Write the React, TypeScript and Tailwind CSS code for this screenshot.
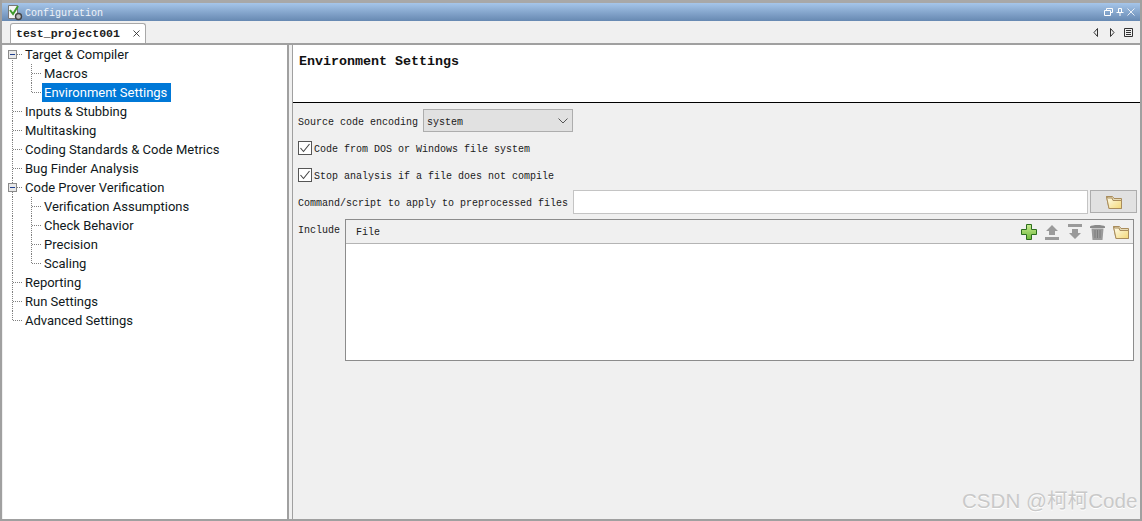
import { X } from "lucide-react";

const mono = "font-['Liberation_Mono','DejaVu_Sans_Mono',monospace]";

type Node = { label: string; level: 0 | 1; box?: boolean; last?: boolean; end?: boolean; selected?: boolean };

const tree: Node[] = [
  { label: "Target & Compiler", level: 0, box: true },
  { label: "Macros", level: 1 },
  { label: "Environment Settings", level: 1, last: true, selected: true },
  { label: "Inputs & Stubbing", level: 0 },
  { label: "Multitasking", level: 0 },
  { label: "Coding Standards & Code Metrics", level: 0 },
  { label: "Bug Finder Analysis", level: 0 },
  { label: "Code Prover Verification", level: 0, box: true },
  { label: "Verification Assumptions", level: 1 },
  { label: "Check Behavior", level: 1 },
  { label: "Precision", level: 1 },
  { label: "Scaling", level: 1, last: true },
  { label: "Reporting", level: 0 },
  { label: "Run Settings", level: 0 },
  { label: "Advanced Settings", level: 0, end: true },
];

function Connector({ node, first }: { node: Node; first: boolean }) {
  const w = node.level === 0 ? 19 : 38;
  const dash = { stroke: "#808080", strokeWidth: 1, strokeDasharray: "1 1" };
  return (
    <svg width={w} height={19} className="shrink-0">
      <line x1={8.5} x2={8.5} y1={first ? 9 : 0} y2={node.end ? 9.5 : 19} {...dash} />
      {node.level === 0 && <line x1={9} x2={19} y1={9.5} y2={9.5} {...dash} />}
      {node.level === 1 && (
        <>
          <line x1={27.5} x2={27.5} y1={0} y2={node.last ? 9.5 : 19} {...dash} />
          <line x1={28} x2={38} y1={9.5} y2={9.5} {...dash} />
        </>
      )}
      {node.box && (
        <>
          <rect x={4.5} y={5.5} width={8} height={8} fill="#e8e8e8" stroke="#8a8a8a" />
          <line x1={6} x2={11} y1={9.5} y2={9.5} stroke="#1f3f8f" />
        </>
      )}
    </svg>
  );
}

function TreeRow({ node, first }: { node: Node; first: boolean }) {
  return (
    <div className="flex h-[19px] items-center">
      <Connector node={node} first={first} />
      <span
        className={
          node.selected
            ? "bg-[#0078d7] px-[2px] pr-[4px] leading-[19px] text-white"
            : "px-[2px] leading-[19px] text-[#101820]"
        }
      >
        {node.label}
      </span>
    </div>
  );
}

function FolderIcon() {
  return (
    <svg width="16" height="14" viewBox="0 0 16 14">
      <defs>
        <linearGradient id="fold" x1="0" y1="0" x2="1" y2="1">
          <stop offset="0" stopColor="#fffef0" />
          <stop offset="1" stopColor="#f3d878" />
        </linearGradient>
      </defs>
      <path d="M0.5 1.5H6.5L8 3.5H15.5V13.5H3Z" fill="#e8dcb8" stroke="#a98c5c" />
      <path d="M0.5 1.5L3 13.5H15.5V5.5H7L6 3H1.5Z" fill="url(#fold)" stroke="#a98c5c" strokeLinejoin="round" />
    </svg>
  );
}

function PlusIcon() {
  return (
    <svg width="16" height="16" viewBox="0 0 16 16">
      <defs>
        <linearGradient id="plus" x1="0" y1="0" x2="0" y2="1">
          <stop offset="0" stopColor="#c8ec90" />
          <stop offset="1" stopColor="#6fb83c" />
        </linearGradient>
      </defs>
      <path
        d="M5.5 0.5H10.5V5.5H15.5V10.5H10.5V15.5H5.5V10.5H0.5V5.5H5.5Z"
        fill="url(#plus)"
        stroke="#2c6e1e"
      />
    </svg>
  );
}

function UpIcon() {
  return (
    <svg width="14" height="16" viewBox="0 0 14 16" fill="#9a9a9a">
      <path d="M7 1L13 7H10V11H4V7H1Z" />
      <rect x="0" y="13" width="14" height="3" />
    </svg>
  );
}

function DownIcon() {
  return (
    <svg width="14" height="16" viewBox="0 0 14 16" fill="#9a9a9a">
      <rect x="0" y="0" width="14" height="3" />
      <path d="M7 15L13 9H10V5H4V9H1Z" />
    </svg>
  );
}

function TrashIcon() {
  return (
    <svg width="15" height="16" viewBox="0 0 15 16">
      <path d="M0 2.5C2 0.5 13 0.5 15 2.5V4H0Z" fill="#8a8a8a" />
      <path d="M1.5 4.5H13.5L12.5 16H2.5Z" fill="#9a9a9a" />
      <path d="M5 6V14M7.5 6V14M10 6V14" stroke="#7c7c7c" />
    </svg>
  );
}

function Check() {
  return (
    <span className="flex h-[14px] w-[14px] shrink-0 items-center justify-center border border-[#555] bg-white">
      <svg width="12" height="12" viewBox="0 0 12 12" fill="none" stroke="#444" strokeWidth="1.1">
        <path d="M1.5 6L4.5 9.5L10.5 2" />
      </svg>
    </span>
  );
}

export default function App() {
  return (
    <div className="flex h-[521px] w-[1142px] flex-col overflow-hidden border-x-2 border-b-2 border-x-[#a0a0a0] border-b-[#a0a0a0] bg-[#f0f0f0] text-[13px] font-['Roboto',sans-serif]">
      <div className="h-[3px] shrink-0 bg-[#a8a8a8]" />
      <div className="flex h-[18px] shrink-0 items-center justify-between bg-gradient-to-b from-[#a6c6ea] to-[#6789b2] pl-[4px] pr-[5px]">
        <div className="flex items-center gap-[2px]">
          <svg width="17" height="17" viewBox="0 0 17 17">
            <path d="M2.5 1.5H11.5V14.5H2.5Z" fill="#f5f5f5" stroke="#777" />
            <path d="M4 6L7 10L12 2" fill="none" stroke="#3f9a2c" strokeWidth="2" />
            <circle cx="12.5" cy="12.5" r="3" fill="#bbb" stroke="#444" strokeWidth="1.4" />
          </svg>
          <span className={`${mono} pt-[2px] text-[10px] text-[#eef3f9]`}>Configuration</span>
        </div>
        <div className="flex items-center gap-[3px]">
          <svg width="9" height="8" viewBox="0 0 9 8" fill="none" stroke="#fff">
            <path d="M2.5 2V0.5H8.5V4.5H6.5M0.5 2.5H6.5V7.5H0.5Z" />
          </svg>
          <svg width="8" height="8" viewBox="0 0 8 8" fill="none" stroke="#fff">
            <path d="M2.5 0.5H5.5V4.5H2.5ZM0.5 4.5H7.5M4 4.5V8" />
          </svg>
          <svg width="8" height="8" viewBox="0 0 8 8" fill="none" stroke="#e8eef6">
            <path d="M0.5 0.5L7.5 7.5M7.5 0.5L0.5 7.5" />
          </svg>
        </div>
      </div>

      <div className="flex h-[24px] shrink-0 items-end justify-between border-b-2 border-b-[#a0a0a0] pl-[8px]">
        <div className="flex h-[20px] w-[136px] items-center gap-[11px] rounded-t-[3px] border-x border-t border-[#a8a8a8] bg-white pl-[5px]">
          <span className={`${mono} pt-[1px] text-[11.55px] font-bold text-[#222]`}>test_project001</span>
          <X size={11} strokeWidth={1.8} className="text-[#222]" />
        </div>
        <div className="flex items-center gap-[9px] self-center pr-[7px] pt-[1px]">
          <svg width="6" height="9" viewBox="0 0 6 9" fill="none" stroke="#333">
            <path d="M4.5 0.5L1 4.5L4.5 8.5Z" />
          </svg>
          <svg width="6" height="9" viewBox="0 0 6 9" fill="none" stroke="#333" className="ml-[1px]">
            <path d="M1.5 0.5L5 4.5L1.5 8.5Z" />
          </svg>
          <svg width="9" height="9" viewBox="0 0 9 9" fill="none" stroke="#333">
            <path d="M0.5 0.5H8.5V8.5H0.5ZM2 2.5H7M2 4.5H7M2 6.5H7" />
          </svg>
        </div>
      </div>

      <div className="flex min-h-0 flex-1">
        <div className="ml-[1px] w-[286px] shrink-0 border-r-2 border-r-[#a0a0a0] bg-white pl-[1px]">
          {tree.map((node, i) => (
            <TreeRow key={node.label} node={node} first={i === 0} />
          ))}
        </div>

        <div className="ml-[3px] flex min-w-0 flex-1 flex-col border-l-[1px] border-l-[#a0a0a0]">
          <div className={`${mono} h-[58px] shrink-0 border-b border-b-black bg-white pl-[6px] pt-[7px] text-[13.33px] font-bold text-[#111]`}>
            Environment Settings
          </div>

          <div className={`${mono} flex flex-col pl-[5px] pr-[3px] text-[10px] text-[#1a1a1a]`}>
            <div className="mt-[6px] flex h-[23px] items-center gap-[5px]">
              <span className="pt-[3px]">Source code encoding</span>
              <div className="flex h-[23px] w-[150px] items-center justify-between border border-[#adadad] bg-[#e1e1e1] pl-[3px] pr-[4px]">
                <span className="pt-[3px]">system</span>
                <svg width="10" height="6" viewBox="0 0 10 6" fill="none" stroke="#555">
                  <path d="M0.5 0.5L5 5L9.5 0.5" />
                </svg>
              </div>
            </div>

            <label className="mt-[9px] flex h-[14px] items-center gap-[2px]">
              <Check />
              <span className="pt-[3px]">Code from DOS or Windows file system</span>
            </label>
            <label className="mt-[13px] flex h-[14px] items-center gap-[2px]">
              <Check />
              <span className="pt-[3px]">Stop analysis if a file does not compile</span>
            </label>

            <div className="mt-[8px] flex h-[24px] items-start gap-[5px]">
              <span className="self-center whitespace-nowrap pt-[3px]">Command/script to apply to preprocessed files</span>
              <div className="h-[24px] flex-1 border border-[#c4c4c4] bg-white" />
              <div className="ml-[-3px] flex h-[23px] w-[47px] shrink-0 items-center justify-center border border-[#adadad] bg-[#e1e1e1]">
                <FolderIcon />
              </div>
            </div>

            <div className="mt-[5px] flex gap-[4px]">
              <span className="w-[43px] shrink-0 pt-[4px]">Include</span>
              <div className="mr-[3px] flex h-[142px] flex-1 flex-col border border-[#8c8c8c]">
                <div className="flex h-[24px] shrink-0 items-center justify-between border-b border-b-[#b4b4b4] pl-[10px] pr-[1px]">
                  <span className="pt-[1px]">File</span>
                  <div className="flex items-center">
                    <span className="flex w-[23px] justify-center"><PlusIcon /></span>
                    <span className="flex w-[23px] justify-center"><UpIcon /></span>
                    <span className="flex w-[23px] justify-center"><DownIcon /></span>
                    <span className="flex w-[23px] justify-center"><TrashIcon /></span>
                    <span className="flex w-[23px] justify-center"><FolderIcon /></span>
                  </div>
                </div>
                <div className="flex-1 bg-white" />
              </div>
            </div>
          </div>
        </div>
      </div>

      <span className="absolute left-[962px] top-[486px] whitespace-nowrap font-['Liberation_Sans','Noto_Sans_CJK_SC',sans-serif] text-[20.6px] text-[#c9c9c9] [text-shadow:0_1px_0_#ffffff]">
        CSDN @柯柯Code
      </span>
    </div>
  );
}
